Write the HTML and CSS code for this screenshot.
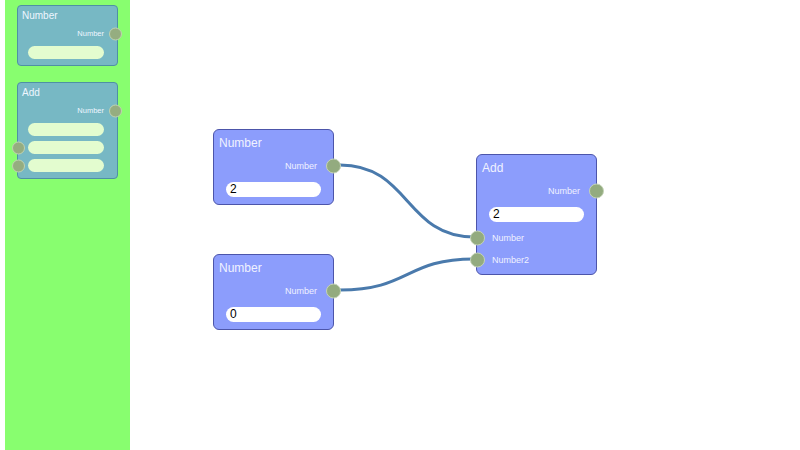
FILE: index.html
```html
<!DOCTYPE html>
<html>
<head>
<meta charset="utf-8">
<link rel="stylesheet" href="styles.css">
</head>
<body>
<div class="app">
  <aside class="palette">
    <div class="pnode">
      <div class="ptitle">Number</div>
      <div class="prow out"><span>Number</span><i class="pport pport-out"></i></div>
      <div class="ppill"></div>
    </div>
    <div class="pnode">
      <div class="ptitle">Add</div>
      <div class="prow out"><span>Number</span><i class="pport pport-out"></i></div>
      <div class="ppill"></div>
      <div class="ppill"><i class="pport pport-in"></i></div>
      <div class="ppill"><i class="pport pport-in"></i></div>
    </div>
  </aside>
  <main class="canvas">
    <svg class="wires" width="800" height="450" viewBox="0 0 800 450">
      <path d="M340 165 C 410 165, 405 237, 474 237" />
      <path d="M340 290 C 410 290, 405 259, 474 259" />
    </svg>
    <div class="node n1">
      <div class="title">Number</div>
      <div class="row out"><span>Number</span><i class="port port-out"></i></div>
      <div class="pill">2</div>
    </div>
    <div class="node n2">
      <div class="title">Number</div>
      <div class="row out"><span>Number</span><i class="port port-out"></i></div>
      <div class="pill">0</div>
    </div>
    <div class="node n3">
      <div class="title">Add</div>
      <div class="row out"><span>Number</span><i class="port port-out"></i></div>
      <div class="pill">2</div>
      <div class="row in"><i class="port port-in"></i><span>Number</span></div>
      <div class="row in"><i class="port port-in"></i><span>Number2</span></div>
    </div>
  </main>
</div>
</body>
</html>
```
FILE: styles.css
```css
* { box-sizing: border-box; }
html, body { margin: 0; padding: 0; background: #fff; }
body { font-family: "Liberation Sans", Arial, sans-serif; width: 800px; height: 450px; overflow: hidden; }
.app { display: flex; height: 450px; }

.palette {
  margin-left: 5px;
  width: 125px;
  height: 450px;
  background: #88fe6f;
  padding: 5px 0 0 12px;
  display: flex;
  flex-direction: column;
  gap: 16px;
}
.pnode {
  width: 101px;
  background: #77b8c4;
  border: 1px solid #4f90a4;
  border-radius: 4px;
  padding: 3px 0 6px;
  display: flex;
  flex-direction: column;
}
.ptitle { height: 13px; line-height: 13px; font-size: 10px; color: #eef6ff; padding-left: 4px; }
.prow { position: relative; height: 12px; margin-top: 6px; line-height: 12px; font-size: 7.5px; color: #eef6ff; }
.prow.out { text-align: right; padding-right: 13px; }
.ppill {
  position: relative;
  height: 13px;
  margin: 6px 13px 0 10px;
  background: #e3fccf;
  border-radius: 7px;
}
.ppill + .ppill { margin-top: 5px; }
.pport {
  position: absolute;
  width: 13px; height: 13px;
  border-radius: 50%;
  background: #95ad80;
  border: 1px solid #c0d2b0;
  top: 50%;
  transform: translateY(-50%);
}
.pport-out { right: -5px; }
.pport-in { left: -16px; }

.canvas { position: relative; flex: 1; height: 450px; }
.wires { position: absolute; left: -130px; top: 0; pointer-events: none; }
.wires path { fill: none; stroke: #4a7aac; stroke-width: 3; stroke-linecap: round; }

.node {
  position: absolute;
  width: 121px;
  background: #8c9dfc;
  border: 1px solid #4c55aa;
  border-radius: 6px;
  padding: 6px 0 8px;
  display: flex;
  flex-direction: column;
}
.n1 { left: 83px; top: 129px; height: 76px; }
.n2 { left: 83px; top: 254px; height: 76px; }
.n3 { left: 346px; top: 154px; height: 121px; }

.title { height: 14px; line-height: 14px; font-size: 12px; color: #f0f2ff; padding-left: 5px; }
.row { position: relative; height: 16px; margin-top: 8px; line-height: 16px; font-size: 9px; color: #f0f2ff; }
.row.out { text-align: right; padding-right: 16px; }
.row.in { padding-left: 15px; }
.row.in + .row.in { margin-top: 6px; }
.pill {
  height: 15px;
  margin: 8px 12px 0 12px;
  background: #fff;
  border-radius: 8px;
  font-size: 12px;
  line-height: 15px;
  color: #000;
  padding-left: 4px;
}
.port {
  position: absolute;
  width: 15px; height: 15px;
  border-radius: 50%;
  background: #93ab7f;
  border: 1px solid #c4d3b6;
  top: 50%;
  transform: translateY(-50%);
}
.port-out { right: -8px; }
.port-in { left: -7px; }
```
